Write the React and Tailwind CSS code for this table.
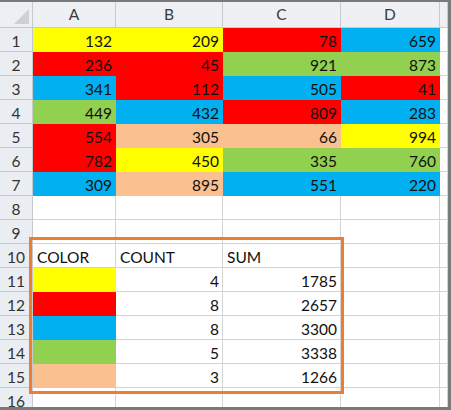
import React from "react";

const Y = "bg-[#ffff00] border-[#ffff00]";
const R = "bg-[#ff0000] border-[#ff0000]";
const B = "bg-[#00b0f0] border-[#00b0f0]";
const G = "bg-[#92d050] border-[#92d050]";
const P = "bg-[#fac090] border-[#fac090]";
const W = "bg-white border-[#d4d4d4]";

const data = [
  [[132, Y], [209, Y], [78, R], [659, B]],
  [[236, R], [45, R], [921, G], [873, G]],
  [[341, B], [112, R], [505, B], [41, R]],
  [[449, G], [432, B], [809, R], [283, B]],
  [[554, R], [305, P], [66, P], [994, Y]],
  [[782, R], [450, Y], [335, G], [760, G]],
  [[309, B], [895, P], [551, B], [220, B]],
  [["", W], ["", W], ["", W], ["", W]],
  [["", W], ["", W], ["", W], ["", W]],
  [["COLOR", W, "left"], ["COUNT", W, "left"], ["SUM", W, "left"], ["", W]],
  [["", Y], [4, W], [1785, W], ["", W]],
  [["", R], [8, W], [2657, W], ["", W]],
  [["", B], [8, W], [3300, W], ["", W]],
  [["", G], [5, W], [3338, W], ["", W]],
  [["", P], [3, W], [1266, W], ["", W]],
  [["", W], ["", W], ["", W], ["", W]],
];

function Cell({ value, color, align }) {
  return (
    <div
      className={`h-[24px] border-r border-b flex items-end pb-[2px] ${color} ${
        align === "left" ? "justify-start pl-[4px]" : "justify-end pr-[3px]"
      }`}
    >
      {value}
    </div>
  );
}

export default function App() {
  const cols = ["A", "B", "C", "D", ""];
  return (
    <div
      className="relative w-[451px] h-[410px] bg-white border-t-2 border-r-[3px] border-b-[3px] border-[#7a7a7a] overflow-hidden text-[15.5px] text-[#111]"
      style={{ fontFamily: "Lato, 'Open Sans', sans-serif" }}
    >
      <div className="grid grid-cols-[33px_83px_107px_118px_99px_1fr] leading-none">
        <div className="h-[26px] bg-[#eceff3] border-r border-b border-[#c6c9ce] relative">
          <div className="absolute right-[3px] bottom-[3px] w-0 h-0 border-l-[15px] border-l-transparent border-b-[15px] border-b-[#cdd0d4]" />
        </div>
        {cols.map((c, i) => (
          <div
            key={i}
            className="h-[26px] bg-[#eef0f3] border-r border-b border-[#c6c9ce] flex items-center justify-center text-[#3b3b3b]"
          >
            {c}
          </div>
        ))}
        {data.map((row, r) => (
          <React.Fragment key={r}>
            <div className="h-[24px] bg-[#eaedf1] border-r border-b border-[#c6c9ce] flex items-end pb-[2px] justify-center text-[#333]">
              {r + 1}
            </div>
            {row.map(([v, color, align], c) => (
              <Cell key={c} value={v} color={color} align={align} />
            ))}
            <div className="h-[24px] bg-white border-r border-b border-[#d4d4d4]" />
          </React.Fragment>
        ))}
      </div>
      <div className="absolute left-[29px] top-[235px] w-[315px] h-[157px] border-[3px] border-[#ed7d31]" />
    </div>
  );
}
